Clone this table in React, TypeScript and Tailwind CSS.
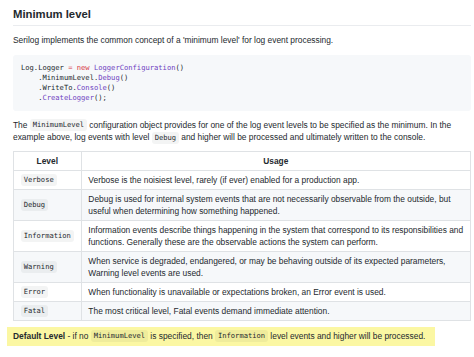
import React from "react";

const C = ({ children }: { children: React.ReactNode }) => (
  <code
    className="rounded-[3px] bg-[rgba(27,31,35,0.05)] px-[2.9px] py-[1.4px] text-[7.14px] leading-none"
    style={{ fontFamily: '"DejaVu Sans Mono", "Liberation Mono", monospace' }}
  >
    {children}
  </code>
);

const rows: { level: string; lines: string[] }[] = [
  { level: "Verbose", lines: ["Verbose is the noisiest level, rarely (if ever) enabled for a production app."] },
  {
    level: "Debug",
    lines: [
      "Debug is used for internal system events that are not necessarily observable from the outside, but",
      "useful when determining how something happened.",
    ],
  },
  {
    level: "Information",
    lines: [
      "Information events describe things happening in the system that correspond to its responsibilities and",
      "functions. Generally these are the observable actions the system can perform.",
    ],
  },
  {
    level: "Warning",
    lines: [
      "When service is degraded, endangered, or may be behaving outside of its expected parameters,",
      "Warning level events are used.",
    ],
  },
  { level: "Error", lines: ["When functionality is unavailable or expectations broken, an Error event is used."] },
  { level: "Fatal", lines: ["The most critical level, Fatal events demand immediate attention."] },
];

export default function App() {
  const red = "text-[#d73a49]";
  const purple = "text-[#6f42c1]";
  return (
    <div
      className="w-[474px] h-[357px] overflow-hidden bg-white pl-[13px] pr-[3px] pt-[7px] text-[#24292e]"
      style={{ fontFamily: '"Liberation Sans", Arial, sans-serif' }}
    >
      <h2 className="border-b border-[#eaecef] pb-[4px] text-[11.3px] font-bold leading-[14px]">Minimum level</h2>
      <p className="mt-[8px] text-[8.4px] leading-[12.6px]">
        Serilog implements the common concept of a 'minimum level' for log event processing.
      </p>
      <pre
        className="mt-[8px] rounded-[3px] bg-[#f6f8fa] px-[8px] py-[8px] text-[7.14px] leading-[10px]"
        style={{ fontFamily: '"DejaVu Sans Mono", "Liberation Mono", monospace' }}
      >
        <div>
          {"Log.Logger "}
          <span className={red}>=</span> <span className={red}>new</span>{" "}
          <span className={purple}>LoggerConfiguration</span>
          {"()"}
        </div>
        <div>
          {"    .MinimumLevel."}
          <span className={purple}>Debug</span>
          {"()"}
        </div>
        <div>
          {"    .WriteTo."}
          <span className={purple}>Console</span>
          {"()"}
        </div>
        <div>
          {"    ."}
          <span className={purple}>CreateLogger</span>
          {"();"}
        </div>
      </pre>
      <p className="mt-[8px] whitespace-nowrap text-[8.4px] leading-[12.6px]">
        The <C>MinimumLevel</C> configuration object provides for one of the log event levels to be specified as the
        minimum. In the
        <br />
        example above, log events with level <C>Debug</C> and higher will be processed and ultimately written to the
        console.
      </p>
      <table className="mt-[7px] w-full border-collapse text-[8.4px] leading-[12px]">
        <thead>
          <tr className="bg-white">
            <th className="w-[66px] border border-[#dfe2e5] px-[6.8px] py-[3px] text-center font-bold">Level</th>
            <th className="border border-[#dfe2e5] px-[6.8px] py-[3px] text-center font-bold">Usage</th>
          </tr>
        </thead>
        <tbody>
          {rows.map((r, i) => (
            <tr key={r.level} className={i % 2 === 1 ? "bg-[#f6f8fa]" : "bg-white"}>
              <td className="border border-[#dfe2e5] px-[6.8px] py-[3px] whitespace-nowrap">
                <C>{r.level}</C>
              </td>
              <td className="border border-[#dfe2e5] px-[6.8px] py-[3px] whitespace-nowrap">
                {r.lines.map((l, j) => (
                  <React.Fragment key={j}>
                    {j > 0 && <br />}
                    {l}
                  </React.Fragment>
                ))}
              </td>
            </tr>
          ))}
        </tbody>
      </table>
      <div className="mt-[6px] flex">
        <span className="-ml-[6px] whitespace-nowrap bg-[#fbf7a3] py-[3px] pl-[6px] pr-[10px] text-[8.4px] leading-[13px]">
          <b>Default Level</b> - if no <C>MinimumLevel</C> is specified, then <C>Information</C> level events and higher
          will be processed.
        </span>
      </div>
    </div>
  );
}
